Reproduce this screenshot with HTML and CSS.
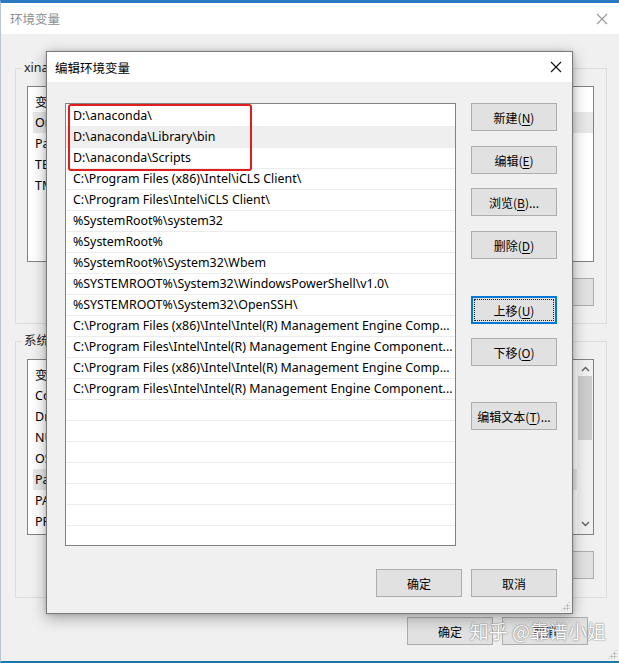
FILE: index.html
```html
<!DOCTYPE html>
<html lang="zh-CN">
<head>
<meta charset="utf-8">
<title>编辑环境变量</title>
<link rel="stylesheet" href="styles.css">
</head>
<body>
<div class="desk">
  <!-- background window -->
  <div class="win bg-win">
    <div class="bg-title">
      <span class="bg-title-text">环境变量</span>
      <svg class="x-icon bg-x" width="12" height="12" viewBox="0 0 12 12"><path d="M1 1L11 11M11 1L1 11" stroke="#9a9a9a" stroke-width="1.1" fill="none"/></svg>
    </div>
    <div class="bg-body">
      <div class="group g-user">
        <span class="group-label">xinai 的用户变量(U)</span>
        <div class="bg-list">
          <div class="bg-row hdr">变量</div>
          <div class="bg-row sel">OneDrive</div>
          <div class="bg-row">Path</div>
          <div class="bg-row">TEMP</div>
          <div class="bg-row">TMP</div>
        </div>
        <div class="bg-btns">
          <span class="btn">新建(N)...</span>
          <span class="btn">编辑(E)...</span>
          <span class="btn">删除(D)</span>
        </div>
      </div>
      <div class="group g-sys">
        <span class="group-label">系统变量(S)</span>
        <div class="bg-list sys-list">
          <div class="bg-rows">
            <div class="bg-row hdr">变量</div>
            <div class="bg-row">ComSpec</div>
            <div class="bg-row">DriverData</div>
            <div class="bg-row">NUMBER_OF_PROCESSORS</div>
            <div class="bg-row">OS</div>
            <div class="bg-row sel">Path</div>
            <div class="bg-row">PATHEXT</div>
            <div class="bg-row">PROCESSOR_ARCHITECTURE</div>
          </div>
          <div class="vscroll">
            <svg width="9" height="6" viewBox="0 0 9 6"><path d="M1 5L4.5 1.5L8 5" stroke="#606060" stroke-width="1.4" fill="none"/></svg>
            <div class="thumb"></div>
            <svg width="9" height="6" viewBox="0 0 9 6"><path d="M1 1L4.5 4.5L8 1" stroke="#606060" stroke-width="1.4" fill="none"/></svg>
          </div>
        </div>
        <div class="bg-btns">
          <span class="btn">新建(W)...</span>
          <span class="btn">编辑(I)...</span>
          <span class="btn">删除(L)</span>
        </div>
      </div>
      <div class="bg-foot">
        <span class="btn">确定</span>
        <span class="btn">取消</span>
      </div>
    </div>
    <div class="grip bg-grip"></div>
    <div class="watermark">知乎 @靠谱小姐</div>
  </div>

  <!-- foreground dialog -->
  <div class="win dlg">
    <div class="dlg-title">
      <span>编辑环境变量</span>
      <svg class="x-icon" width="12" height="12" viewBox="0 0 12 12"><path d="M1 1L11 11M11 1L1 11" stroke="#111" stroke-width="1.1" fill="none"/></svg>
    </div>
    <div class="dlg-body">
      <div class="dlg-main">
        <div class="path-list">
          <div class="row">D:\anaconda\</div>
          <div class="row hover">D:\anaconda\Library\bin</div>
          <div class="row">D:\anaconda\Scripts</div>
          <div class="row">C:\Program Files (x86)\Intel\iCLS Client\</div>
          <div class="row">C:\Program Files\Intel\iCLS Client\</div>
          <div class="row">%SystemRoot%\system32</div>
          <div class="row">%SystemRoot%</div>
          <div class="row">%SystemRoot%\System32\Wbem</div>
          <div class="row">%SYSTEMROOT%\System32\WindowsPowerShell\v1.0\</div>
          <div class="row">%SYSTEMROOT%\System32\OpenSSH\</div>
          <div class="row">C:\Program Files (x86)\Intel\Intel(R) Management Engine Comp...</div>
          <div class="row">C:\Program Files\Intel\Intel(R) Management Engine Component...</div>
          <div class="row">C:\Program Files (x86)\Intel\Intel(R) Management Engine Comp...</div>
          <div class="row">C:\Program Files\Intel\Intel(R) Management Engine Component...</div>
          <div class="row"></div>
          <div class="row"></div>
          <div class="row"></div>
          <div class="row"></div>
          <div class="row"></div>
          <div class="row"></div>
          <div class="row"></div>
          <div class="highlight"></div>
        </div>
        <div class="side-btns">
          <span class="btn b-new">新建(<u>N</u>)</span>
          <span class="btn b-edit">编辑(<u>E</u>)</span>
          <span class="btn b-browse">浏览(<u>B</u>)...</span>
          <span class="btn b-del">删除(<u>D</u>)</span>
          <span class="btn focus b-up">上移(<u>U</u>)</span>
          <span class="btn b-down">下移(<u>O</u>)</span>
          <span class="btn b-text">编辑文本(<u>T</u>)...</span>
        </div>
      </div>
      <div class="dlg-foot">
        <span class="btn">确定</span>
        <span class="btn">取消</span>
      </div>
    </div>
    <div class="grip dlg-grip"></div>
  </div>
</div>
</body>
</html>
```

FILE: styles.css
```css
* { box-sizing: border-box; }
html, body { margin: 0; padding: 0; }
body {
  width: 619px;
  height: 663px;
  overflow: hidden;
  background: #f0f0f0;
  font-family: "Noto Sans", "Noto Sans CJK SC", sans-serif;
  font-size: 12px;
  color: #000;
}
.desk { position: relative; width: 619px; height: 663px; }
.win { position: absolute; }

/* ---------- background window ---------- */
.bg-win {
  left: 0; top: 0; width: 619px; height: 663px;
  background: #f0f0f0;
  border-top: 3px solid #2b79c2;
  border-left: 1px solid #b9c6d2;
  border-bottom: 2px solid #1b7aa8;
}
.bg-title {
  height: 31px;
  background: #fff;
  display: flex;
  align-items: center;
  justify-content: space-between;
  padding: 0 11px 0 9px;
}
.bg-title-text { color: #8e8e8e; font-size: 12.5px; font-family: "Noto Sans CJK SC", sans-serif; }
.bg-body {
  display: flex;
  flex-direction: column;
  padding: 34px 12px 0 14px;
}
.group {
  position: relative;
  border: 1px solid #dcdcdc;
  padding: 17px 12px 0 11px;
}
.group-label {
  position: absolute;
  left: 6px; top: -9px;
  background: #f0f0f0;
  padding: 0 2px;
  font-size: 12.5px;
  line-height: 16px;
  color: #1a1a1a;
  font-family: "Noto Sans", "Noto Sans CJK SC", sans-serif;
}
.g-user { height: 256px; }
.g-sys { height: 257px; margin-top: 17px; }
.bg-list {
  height: 176px;
  background: #fff;
  border: 1px solid #828282;
  padding: 4px 0 0 5px;
  font-size: 12.5px;
}
.sys-list { display: flex; padding: 0; }
.bg-rows { flex: 1; padding: 4px 0 0 5px; }
.bg-row { height: 21px; line-height: 21px; padding-left: 2px; }
.bg-row.sel { background: #e8e8e8; }
.bg-row.hdr { font-family: "Noto Sans CJK SC", sans-serif; }
.vscroll {
  width: 16px;
  background: #f0f0f0;
  display: flex;
  flex-direction: column;
  align-items: center;
  padding: 6px 0 7px;
}
.thumb { width: 14px; height: 64px; background: #cdcdcd; margin: 4px 0 auto; }
.bg-btns {
  display: flex;
  justify-content: flex-end;
  gap: 9px;
  margin-top: 16px;
}
.bg-foot {
  display: flex;
  justify-content: flex-end;
  gap: 9px;
  margin-top: 19px;
  padding-right: 19px;
}
.bg-foot .btn { height: 28px; }

.watermark {
  position: absolute;
  right: 13px; bottom: 17px;
  font-family: "Noto Sans CJK SC", sans-serif;
  font-size: 19px;
  color: #fff;
  text-shadow: 0 0 1px #6f6f6f, 0 0 2px #999;
}

/* ---------- buttons ---------- */
.btn {
  display: inline-flex;
  align-items: center;
  justify-content: center;
  width: 86px;
  height: 28px;
  background: #e1e1e1;
  border: 1px solid #adadad;
  font-family: "Noto Sans CJK SC", sans-serif;
  font-size: 12px;
  color: #000;
  white-space: nowrap;
}
.btn u { text-decoration: underline; text-underline-offset: 2px; }
.btn.focus {
  border: 2px solid #0078d7;
  outline: 1px dotted #1a1a1a;
  outline-offset: -4px;
}

/* ---------- dialog ---------- */
.dlg {
  left: 46px; top: 51px; width: 527px; height: 563px;
  background: #f0f0f0;
  border: 1px solid #7a7a7a;
  box-shadow: 0 4px 14px rgba(0,0,0,0.32), 0 0 4px rgba(0,0,0,0.15);
  display: flex;
  flex-direction: column;
}
.dlg-title {
  height: 30px;
  background: #fff;
  display: flex;
  align-items: center;
  justify-content: space-between;
  padding: 0 10px 0 8px;
  font-family: "Noto Sans CJK SC", sans-serif;
  font-size: 12.5px;
}
.dlg-body {
  flex: 1;
  display: flex;
  flex-direction: column;
  padding: 21px 15px 0 18px;
}
.dlg-main { display: flex; gap: 15px; }
.path-list {
  position: relative;
  width: 392px;
  height: 443px;
  background: #fff;
  border: 1px solid #828282;
  padding-top: 2px;
  overflow: hidden;
  font-family: "Noto Sans", sans-serif;
  font-size: 12.4px;
}
.row {
  height: 21px;
  line-height: 20px;
  padding-left: 7px;
  border-bottom: 1px solid #ececec;
  white-space: nowrap;
  overflow: hidden;
}
.row.hover { background: #efefef; }
.highlight {
  position: absolute;
  left: 2px; top: 0px;
  width: 184px; height: 67px;
  border: 2.5px solid #e01e1e;
  border-radius: 3px;
}
.side-btns { display: flex; flex-direction: column; }
.b-edit { margin-top: 15px; }
.b-browse { margin-top: 14px; }
.b-del { margin-top: 15px; }
.b-up { margin-top: 37px; }
.b-down { margin-top: 14px; }
.b-text { margin-top: 36px; }
.dlg-foot {
  display: flex;
  justify-content: flex-end;
  gap: 9px;
  margin-top: 23px;
}

.grip {
  position: absolute;
  width: 10px; height: 10px;
  background-image: radial-gradient(circle, #a8a8a8 0.9px, transparent 1.1px);
  background-size: 3px 3px;
  clip-path: polygon(100% 0, 100% 100%, 0 100%);
}
.dlg-grip { right: 2px; bottom: 2px; }
.bg-grip { right: 2px; bottom: 2px; }
```
